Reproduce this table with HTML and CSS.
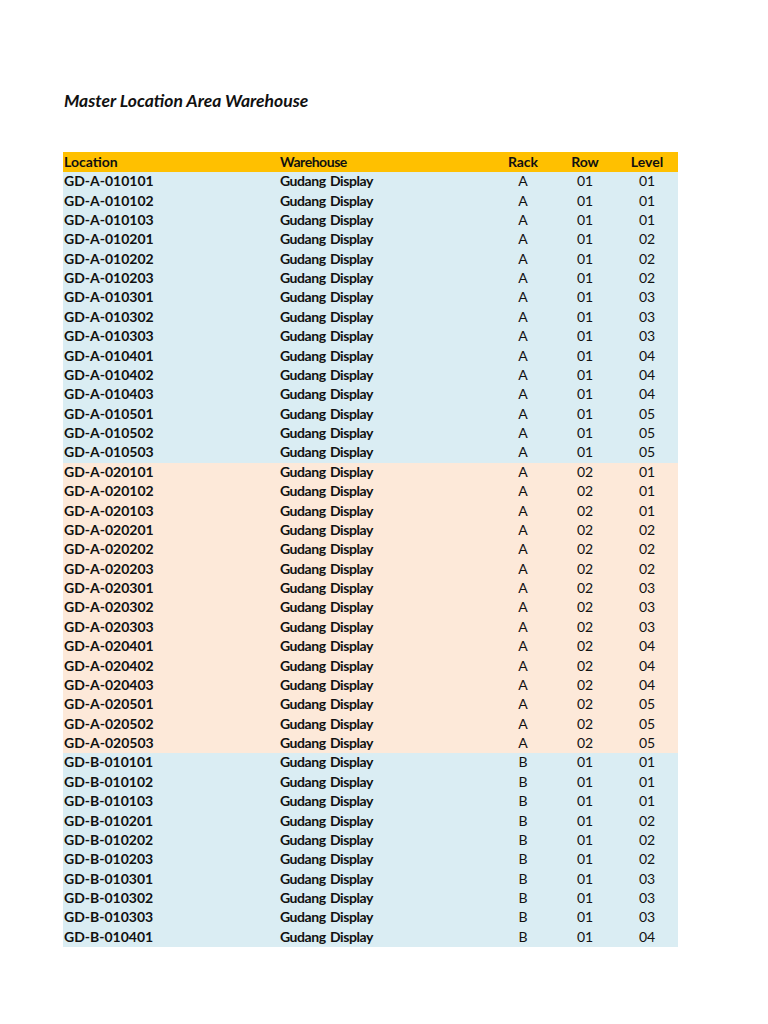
FILE: index.html
```html
<!DOCTYPE html>
<html>
<head>
<meta charset="utf-8">
<link rel="stylesheet" href="styles.css">
</head>
<body>
<div class="page">
  <h1 class="title">Master Location Area Warehouse</h1>
  <div class="table">
    <div class="row head"><div class="c loc">Location</div><div class="c wh">Warehouse</div><div class="c num">Rack</div><div class="c num">Row</div><div class="c num">Level</div></div>
    <div class="row blue"><div class="c loc">GD-A-010101</div><div class="c wh">Gudang Display</div><div class="c num">A</div><div class="c num">01</div><div class="c num">01</div></div>
    <div class="row blue"><div class="c loc">GD-A-010102</div><div class="c wh">Gudang Display</div><div class="c num">A</div><div class="c num">01</div><div class="c num">01</div></div>
    <div class="row blue"><div class="c loc">GD-A-010103</div><div class="c wh">Gudang Display</div><div class="c num">A</div><div class="c num">01</div><div class="c num">01</div></div>
    <div class="row blue"><div class="c loc">GD-A-010201</div><div class="c wh">Gudang Display</div><div class="c num">A</div><div class="c num">01</div><div class="c num">02</div></div>
    <div class="row blue"><div class="c loc">GD-A-010202</div><div class="c wh">Gudang Display</div><div class="c num">A</div><div class="c num">01</div><div class="c num">02</div></div>
    <div class="row blue"><div class="c loc">GD-A-010203</div><div class="c wh">Gudang Display</div><div class="c num">A</div><div class="c num">01</div><div class="c num">02</div></div>
    <div class="row blue"><div class="c loc">GD-A-010301</div><div class="c wh">Gudang Display</div><div class="c num">A</div><div class="c num">01</div><div class="c num">03</div></div>
    <div class="row blue"><div class="c loc">GD-A-010302</div><div class="c wh">Gudang Display</div><div class="c num">A</div><div class="c num">01</div><div class="c num">03</div></div>
    <div class="row blue"><div class="c loc">GD-A-010303</div><div class="c wh">Gudang Display</div><div class="c num">A</div><div class="c num">01</div><div class="c num">03</div></div>
    <div class="row blue"><div class="c loc">GD-A-010401</div><div class="c wh">Gudang Display</div><div class="c num">A</div><div class="c num">01</div><div class="c num">04</div></div>
    <div class="row blue"><div class="c loc">GD-A-010402</div><div class="c wh">Gudang Display</div><div class="c num">A</div><div class="c num">01</div><div class="c num">04</div></div>
    <div class="row blue"><div class="c loc">GD-A-010403</div><div class="c wh">Gudang Display</div><div class="c num">A</div><div class="c num">01</div><div class="c num">04</div></div>
    <div class="row blue"><div class="c loc">GD-A-010501</div><div class="c wh">Gudang Display</div><div class="c num">A</div><div class="c num">01</div><div class="c num">05</div></div>
    <div class="row blue"><div class="c loc">GD-A-010502</div><div class="c wh">Gudang Display</div><div class="c num">A</div><div class="c num">01</div><div class="c num">05</div></div>
    <div class="row blue"><div class="c loc">GD-A-010503</div><div class="c wh">Gudang Display</div><div class="c num">A</div><div class="c num">01</div><div class="c num">05</div></div>
    <div class="row peach"><div class="c loc">GD-A-020101</div><div class="c wh">Gudang Display</div><div class="c num">A</div><div class="c num">02</div><div class="c num">01</div></div>
    <div class="row peach"><div class="c loc">GD-A-020102</div><div class="c wh">Gudang Display</div><div class="c num">A</div><div class="c num">02</div><div class="c num">01</div></div>
    <div class="row peach"><div class="c loc">GD-A-020103</div><div class="c wh">Gudang Display</div><div class="c num">A</div><div class="c num">02</div><div class="c num">01</div></div>
    <div class="row peach"><div class="c loc">GD-A-020201</div><div class="c wh">Gudang Display</div><div class="c num">A</div><div class="c num">02</div><div class="c num">02</div></div>
    <div class="row peach"><div class="c loc">GD-A-020202</div><div class="c wh">Gudang Display</div><div class="c num">A</div><div class="c num">02</div><div class="c num">02</div></div>
    <div class="row peach"><div class="c loc">GD-A-020203</div><div class="c wh">Gudang Display</div><div class="c num">A</div><div class="c num">02</div><div class="c num">02</div></div>
    <div class="row peach"><div class="c loc">GD-A-020301</div><div class="c wh">Gudang Display</div><div class="c num">A</div><div class="c num">02</div><div class="c num">03</div></div>
    <div class="row peach"><div class="c loc">GD-A-020302</div><div class="c wh">Gudang Display</div><div class="c num">A</div><div class="c num">02</div><div class="c num">03</div></div>
    <div class="row peach"><div class="c loc">GD-A-020303</div><div class="c wh">Gudang Display</div><div class="c num">A</div><div class="c num">02</div><div class="c num">03</div></div>
    <div class="row peach"><div class="c loc">GD-A-020401</div><div class="c wh">Gudang Display</div><div class="c num">A</div><div class="c num">02</div><div class="c num">04</div></div>
    <div class="row peach"><div class="c loc">GD-A-020402</div><div class="c wh">Gudang Display</div><div class="c num">A</div><div class="c num">02</div><div class="c num">04</div></div>
    <div class="row peach"><div class="c loc">GD-A-020403</div><div class="c wh">Gudang Display</div><div class="c num">A</div><div class="c num">02</div><div class="c num">04</div></div>
    <div class="row peach"><div class="c loc">GD-A-020501</div><div class="c wh">Gudang Display</div><div class="c num">A</div><div class="c num">02</div><div class="c num">05</div></div>
    <div class="row peach"><div class="c loc">GD-A-020502</div><div class="c wh">Gudang Display</div><div class="c num">A</div><div class="c num">02</div><div class="c num">05</div></div>
    <div class="row peach"><div class="c loc">GD-A-020503</div><div class="c wh">Gudang Display</div><div class="c num">A</div><div class="c num">02</div><div class="c num">05</div></div>
    <div class="row blue"><div class="c loc">GD-B-010101</div><div class="c wh">Gudang Display</div><div class="c num">B</div><div class="c num">01</div><div class="c num">01</div></div>
    <div class="row blue"><div class="c loc">GD-B-010102</div><div class="c wh">Gudang Display</div><div class="c num">B</div><div class="c num">01</div><div class="c num">01</div></div>
    <div class="row blue"><div class="c loc">GD-B-010103</div><div class="c wh">Gudang Display</div><div class="c num">B</div><div class="c num">01</div><div class="c num">01</div></div>
    <div class="row blue"><div class="c loc">GD-B-010201</div><div class="c wh">Gudang Display</div><div class="c num">B</div><div class="c num">01</div><div class="c num">02</div></div>
    <div class="row blue"><div class="c loc">GD-B-010202</div><div class="c wh">Gudang Display</div><div class="c num">B</div><div class="c num">01</div><div class="c num">02</div></div>
    <div class="row blue"><div class="c loc">GD-B-010203</div><div class="c wh">Gudang Display</div><div class="c num">B</div><div class="c num">01</div><div class="c num">02</div></div>
    <div class="row blue"><div class="c loc">GD-B-010301</div><div class="c wh">Gudang Display</div><div class="c num">B</div><div class="c num">01</div><div class="c num">03</div></div>
    <div class="row blue"><div class="c loc">GD-B-010302</div><div class="c wh">Gudang Display</div><div class="c num">B</div><div class="c num">01</div><div class="c num">03</div></div>
    <div class="row blue"><div class="c loc">GD-B-010303</div><div class="c wh">Gudang Display</div><div class="c num">B</div><div class="c num">01</div><div class="c num">03</div></div>
    <div class="row blue"><div class="c loc">GD-B-010401</div><div class="c wh">Gudang Display</div><div class="c num">B</div><div class="c num">01</div><div class="c num">04</div></div>
  </div>
</div>
</body>
</html>
```
FILE: styles.css
```css
html, body {
  margin: 0;
  padding: 0;
  background: #ffffff;
}
body {
  font-family: Lato, "Open Sans", "Liberation Sans", sans-serif;
  color: #111111;
}
.page {
  padding: 91px 0 0 63px;
}
.title {
  margin: 0 0 41px 1px;
  font-size: 17.5px;
  line-height: 20px;
  height: 20px;
  font-style: italic;
  font-weight: 700;
}
.table {
  width: 615px;
  display: flex;
  flex-direction: column;
}
.row {
  display: grid;
  grid-template-columns: 216px 213px 62px 62px 62px;
  height: 19.375px;
  align-items: center;
  font-size: 14px;
  line-height: 17px;
}
.row.head {
  height: 20px;
  background: #ffc000;
  font-weight: 700;
}
.row.blue { background: #daedf3; }
.row.peach { background: #fde9d9; }
.c {
  white-space: nowrap;
  padding-bottom: 2px;
}
.loc, .wh {
  padding-left: 1px;
  font-weight: 700;
}
.wh {
  letter-spacing: -0.45px;
  word-spacing: 1.5px;
}
.num {
  text-align: center;
}
```
